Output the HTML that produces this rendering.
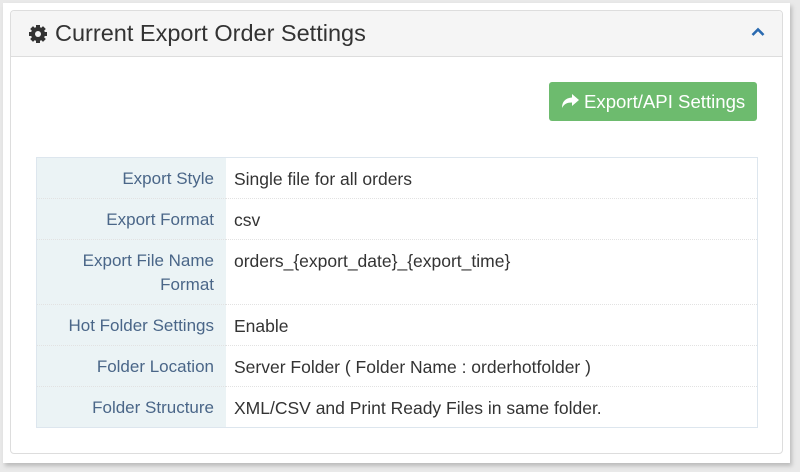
<!DOCTYPE html>
<html><head><style>
body{margin:0;width:800px;height:472px;background:#e9e9e9;font-family:"Liberation Sans",sans-serif;position:relative;overflow:hidden}
.outer{position:absolute;left:3px;top:3px;width:787px;height:460px;background:#fff;box-shadow:2px 3px 4px #bbb}
.panel{position:absolute;left:10px;top:10px;width:771px;height:442px;border:1px solid #ddd;border-radius:4px;background:#fff}
.hd{height:45px;background:#f5f5f5;border-bottom:1px solid #ddd;border-radius:4px 4px 0 0;position:relative}
.hd .t{position:absolute;left:44px;top:9px;font-size:23.5px;color:#333;white-space:nowrap}
.hd svg.g{position:absolute;left:17px;top:13px}
.hd svg.c{position:absolute;left:740px;top:16px}
.btn{position:absolute;left:538px;top:71px;width:208px;height:39px;background:#6dbb6e;border-radius:3px;color:#fff;font-size:18.6px;line-height:39px;white-space:nowrap}
.btn span{position:absolute;left:35px}
.btn svg{position:absolute;left:11px;top:11px}
table{position:absolute;left:25px;top:146px;width:722px;border-collapse:collapse;border:1px solid #dde6ee}
td{border-top:1px dotted #e2e2e2;vertical-align:top;padding:0 8px;padding-top:9px;line-height:24px;white-space:nowrap}
td.l{width:169px;background:#ebf3f5;color:#4a6688;text-align:right;padding-right:12px;font-size:17px}
td.v{color:#333;font-size:17.5px}
tr{height:41px}
</style></head><body>
<div class="outer"></div>
<div class="panel">
<div class="hd">
<svg class="g" width="20" height="20" viewBox="0 0 20 20"><g fill="#333"><circle cx="10" cy="10" r="7"/><g stroke="#333" stroke-width="4"><line x1="10" y1="1" x2="10" y2="19"/><line x1="1" y1="10" x2="19" y2="10"/><line x1="3.6" y1="3.6" x2="16.4" y2="16.4"/><line x1="16.4" y1="3.6" x2="3.6" y2="16.4"/></g></g><circle cx="10" cy="10" r="3" fill="#f5f5f5"/></svg>
<span class="t">Current Export Order Settings</span>
<svg class="c" width="14" height="10" viewBox="0 0 14 10"><path d="M1.5 8 L7 2.5 L12.5 8" stroke="#2a6ab0" stroke-width="2.6" fill="none"/></svg>
</div>
<div class="btn"><svg width="20" height="16" viewBox="0 0 20 16"><path d="M12 1 L19 7 L12 13 V9.5 C7 9.5 4 11 2 15 C2 9 5 5 12 4.5 Z" fill="#fff"/></svg><span>Export/API Settings</span></div>
<table>
<tr><td class="l">Export Style</td><td class="v">Single file for all orders</td></tr>
<tr><td class="l">Export Format</td><td class="v">csv</td></tr>
<tr style="height:65px"><td class="l">Export File Name<br>Format</td><td class="v">orders_{export_date}_{export_time}</td></tr>
<tr><td class="l">Hot Folder Settings</td><td class="v">Enable</td></tr>
<tr><td class="l">Folder Location</td><td class="v">Server Folder ( Folder Name : orderhotfolder )</td></tr>
<tr><td class="l">Folder Structure</td><td class="v">XML/CSV and Print Ready Files in same folder.</td></tr>
</table>
</div>
</body></html>
